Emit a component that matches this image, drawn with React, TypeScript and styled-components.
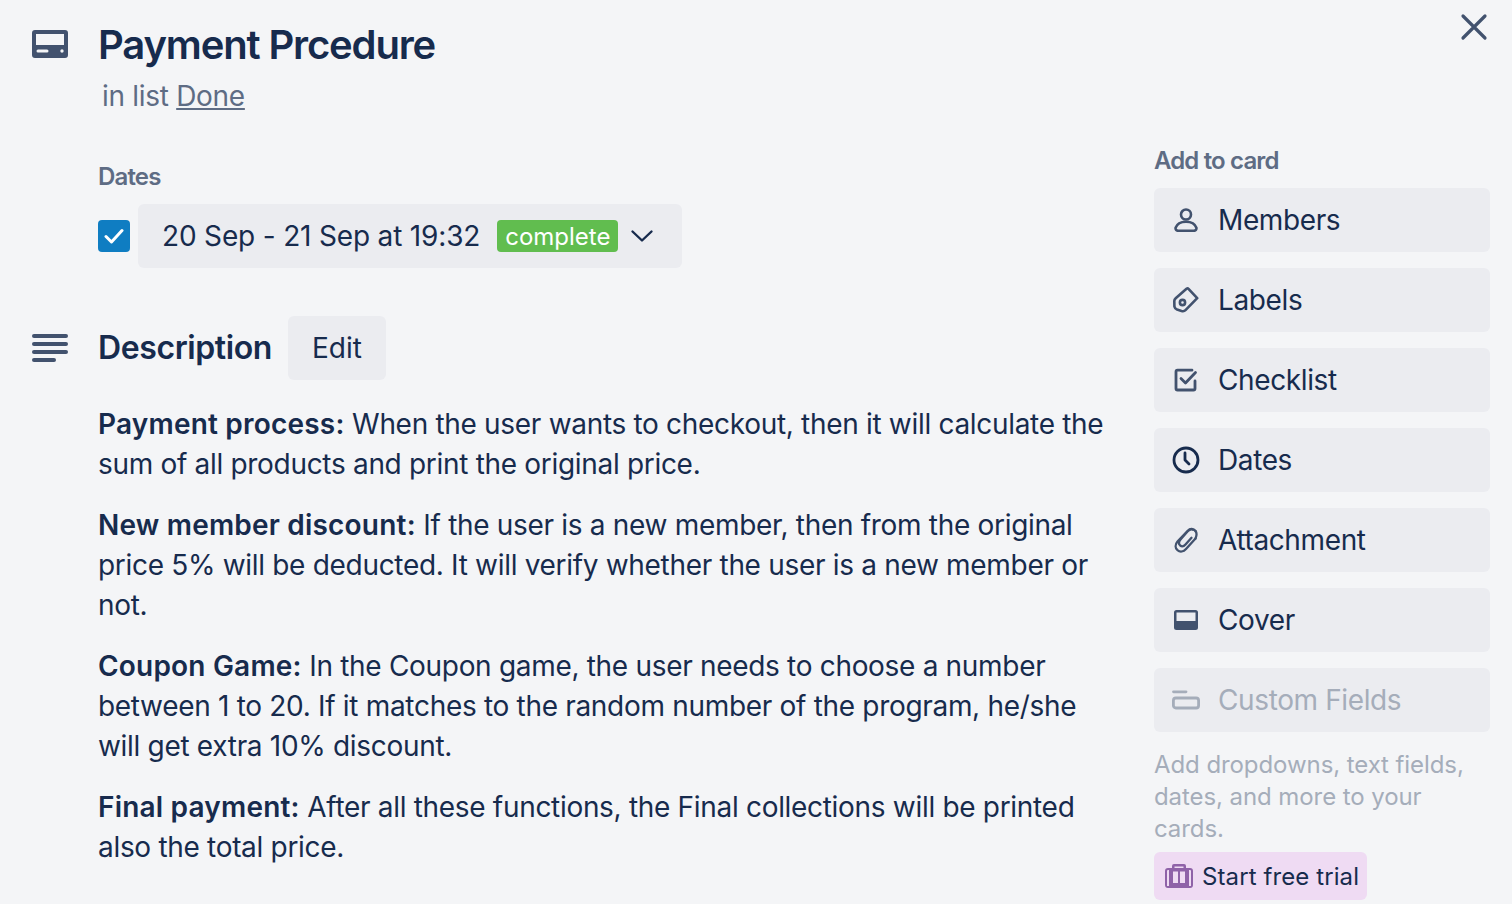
import styled, { createGlobalStyle } from "styled-components";

const GlobalStyle = createGlobalStyle`
  html, body {
    margin: 0;
    padding: 0;
    height: 100%;
    overflow: hidden;
    background: #f4f5f7;
  }
  body {
    font-family: "Inter", "Liberation Sans", sans-serif;
    color: #172b4d;
  }
  * {
    box-sizing: border-box;
  }
`;

const sideItems = [
  { label: "Members", icon: <MemberIcon /> },
  { label: "Labels", icon: <LabelIcon /> },
  { label: "Checklist", icon: <ChecklistIcon /> },
  { label: "Dates", icon: <ClockIcon /> },
  { label: "Attachment", icon: <ClipIcon /> },
  { label: "Cover", icon: <CoverIcon /> },
];

export default function App() {
  return (
    <Page>
      <GlobalStyle />
      <CloseButton aria-label="Close">
        <svg width="28" height="28" viewBox="0 0 28 28" fill="none">
          <path
            d="M3 3 L25 25 M25 3 L3 25"
            stroke="#42526e"
            strokeWidth="3.200"
            strokeLinecap="round"
          />
        </svg>
      </CloseButton>
      <Main>
        <Header>
          <CardIconSlot>
            <svg width="36" height="28" viewBox="0 0 36 28">
              <path
                fillRule="evenodd"
                fill="#42526e"
                d="M3 0 H33 A3 3 0 0 1 36 3 V25 A3 3 0 0 1 33 28 H3 A3 3 0 0 1 0 25 V3 A3 3 0 0 1 3 0 Z M4 4 V15 H32 V4 Z M6 19.5 A1.5 1.5 0 0 0 6 22.500 H15 A1.500 1.500 0 0 0 15 19.500 Z M30 19.300 A1.700 1.700 0 1 0 30 22.700 A1.700 1.700 0 1 0 30 19.300 Z"
              />
            </svg>
          </CardIconSlot>
          <div>
            <Title>Payment Prcedure</Title>
            <ListNote>
              in list <a href="#done">Done</a>
            </ListNote>
          </div>
        </Header>

        <DatesBlock>
          <SectionLabel>Dates</SectionLabel>
          <DatesRow>
            <CheckBox>
              <svg width="20" height="16" viewBox="0 0 20 16" fill="none">
                <path
                  d="M2 8.500 L7.500 14 L18 2.500"
                  stroke="#fff"
                  strokeWidth="3"
                  strokeLinecap="round"
                  strokeLinejoin="round"
                />
              </svg>
            </CheckBox>
            <DateButton>
              <span>20 Sep - 21 Sep at 19:32</span>
              <StatusBadge>complete</StatusBadge>
              <svg width="24" height="14" viewBox="0 0 24 14" fill="none">
                <path
                  d="M2.500 2.500 L12 11.500 L21.500 2.500"
                  stroke="#172b4d"
                  strokeWidth="2.400"
                  strokeLinecap="round"
                  strokeLinejoin="round"
                />
              </svg>
            </DateButton>
          </DatesRow>
        </DatesBlock>

        <DescriptionHead>
          <IconSlot>
            <svg width="36" height="28" viewBox="0 0 36 28" fill="#42526e">
              <rect x="0" y="0" width="36" height="4" rx="2" />
              <rect x="0" y="8" width="36" height="4" rx="2" />
              <rect x="0" y="16" width="36" height="4" rx="2" />
              <rect x="0" y="24" width="24" height="4" rx="2" />
            </svg>
          </IconSlot>
          <SectionTitle>Description</SectionTitle>
          <EditButton>Edit</EditButton>
        </DescriptionHead>

        <Description>
          <p>
            <strong>Payment process:</strong> When the user wants to checkout,
            then it will calculate the sum of all products and print the
            original price.
          </p>
          <p>
            <strong>New member discount:</strong> If the user is a new member,
            then from the original price 5% will be deducted. It will verify
            whether the user is a new member or not.
          </p>
          <p>
            <strong>Coupon Game:</strong> In the Coupon game, the user needs to
            choose a number between 1 to 20. If it matches to the random number
            of the program, he/she will get extra 10% discount.
          </p>
          <p>
            <strong>Final payment:</strong> After all these functions, the Final
            collections will be printed also the total price.
          </p>
        </Description>
      </Main>

      <Sidebar>
        <SideLabel>Add to card</SideLabel>
        <SideList>
          {sideItems.map((item) => (
            <SideButton key={item.label}>
              <SideIcon>{item.icon}</SideIcon>
              {item.label}
            </SideButton>
          ))}
          <SideButton disabled>
            <SideIcon>
              <FieldsIcon />
            </SideIcon>
            Custom Fields
          </SideButton>
        </SideList>
        <UpsellText>
          Add dropdowns, text fields, dates, and more to your cards.
        </UpsellText>
        <TrialButton>
          <svg width="28" height="24" viewBox="0 0 28 24" fill="#8f62a8">
            <path
              fillRule="evenodd"
              d="M9 0 H19 A2 2 0 0 1 21 2 V4 H25 A3 3 0 0 1 28 7 V21 A3 3 0 0 1 25 24 H3 A3 3 0 0 1 0 21 V7 A3 3 0 0 1 3 4 H7 V2 A2 2 0 0 1 9 0 Z M9.500 2.500 V4 H18.500 V2.500 Z M2 7 V22 H4 V6 H3 A1 1 0 0 0 2 7 Z M24 6 V22 H26 V7 A1 1 0 0 0 25 6 Z M8 7.500 V19 H13 V7.500 Z M15 7.500 V19 H20 V7.500 Z"
            />
          </svg>
          Start free trial
        </TrialButton>
      </Sidebar>
    </Page>
  );
}

function MemberIcon() {
  return (
    <svg width="24" height="24" viewBox="0 0 24 24" fill="none" stroke="#42526e" strokeWidth="2.600">
      <circle cx="12" cy="6.500" r="5" />
      <path d="M4 22.800 H20 A2.500 2.500 0 0 0 22.400 19.800 C21 15.800 17 13.800 12 13.800 C7 13.800 3 15.800 1.600 19.800 A2.500 2.500 0 0 0 4 22.800 Z" />
    </svg>
  );
}

function LabelIcon() {
  return (
    <svg width="26" height="26" viewBox="0 0 26 26" fill="none" stroke="#42526e" strokeWidth="2.600" strokeLinejoin="round">
      <path d="M15.500 1.800 L24.200 11.200 L12.500 23.200 C11.500 24.200 10 24.400 8.500 24 L4 22.600 C2.500 22 1.700 21 1.400 19.500 L1.300 14 C1.300 12.800 1.800 12 2.700 11.200 L13.500 1.800 C14.200 1.300 15 1.300 15.500 1.800 Z" />
      <circle cx="9.500" cy="15.500" r="2.600" />
    </svg>
  );
}

function ChecklistIcon() {
  return (
    <svg width="24" height="24" viewBox="0 0 24 24" fill="none" stroke="#42526e" strokeWidth="2.800" strokeLinecap="round" strokeLinejoin="round">
      <path d="M18 2.200 H3.500 A1.500 1.500 0 0 0 2 3.700 V20.500 A1.500 1.500 0 0 0 3.500 22 H19.500 A1.500 1.500 0 0 0 21 20.500 V13" />
      <path d="M7 10.500 L11.500 15 L21.500 4.500" />
    </svg>
  );
}

function ClockIcon() {
  return (
    <svg width="28" height="28" viewBox="0 0 28 28" fill="none" stroke="#172b4d" strokeWidth="2.800" strokeLinecap="round" strokeLinejoin="round">
      <circle cx="14" cy="14" r="12" />
      <path d="M13 7 V14 L17 18" />
    </svg>
  );
}

function ClipIcon() {
  return (
    <svg width="24" height="26" viewBox="0 0 24 26" fill="none" stroke="#42526e" strokeWidth="2.300" strokeLinecap="round">
      <path d="M21.500 4 C19.500 1.200 16 1.200 14 3.500 L3.500 14.500 C1 17.500 1 21 3.500 23.200 C6 25.300 9.500 24.800 12 22 L21.500 11.500" />
      <path d="M19 2.800 C16.800 1.800 15 3 13.500 4.500 L6.500 12.500 C4.500 15 4.800 17.300 6.200 18.500 C7.800 19.800 10 19.200 11.500 17.500 L17.500 10.800" />
      <path d="M21.500 4 C23 6 22.800 8.500 21.500 11.500" />
    </svg>
  );
}

function CoverIcon() {
  return (
    <svg width="24" height="20" viewBox="0 0 24 20" fill="#42526e">
      <path
        fillRule="evenodd"
        d="M2.500 0 H21.500 A2.500 2.500 0 0 1 24 2.500 V17.500 A2.500 2.500 0 0 1 21.500 20 H2.500 A2.500 2.500 0 0 1 0 17.500 V2.500 A2.500 2.500 0 0 1 2.500 0 Z M2.500 2.500 V11 H21.500 V2.500 Z"
      />
    </svg>
  );
}

function FieldsIcon() {
  return (
    <svg width="28" height="20" viewBox="0 0 28 20" fill="none" stroke="#a5adba" strokeWidth="2.800" strokeLinecap="round">
      <path d="M1.500 1.800 H14" />
      <rect x="1.400" y="8" width="25.200" height="10" rx="2.500" />
    </svg>
  );
}

const Page = styled.div`
  position: relative;
  width: 1512px;
  height: 904px;
  overflow: hidden;
  display: grid;
  grid-template-columns: 1154px 336px;
  background: #f4f5f7;
`;

const CloseButton = styled.button`
  position: absolute;
  top: 13px;
  left: 1460px;
  width: 28px;
  height: 28px;
  padding: 0;
  border: 0;
  background: none;
  display: flex;
`;

const Main = styled.main`
  padding: 21px 46px 0 32px;
`;

const Header = styled.header`
  display: flex;
`;

const IconSlot = styled.div`
  flex: none;
  width: 66px;
  display: flex;
`;

const CardIconSlot = styled(IconSlot)`
  padding-top: 9px;
`;

const Title = styled.h1`
  margin: 0;
  font-size: 40px;
  line-height: 48px;
  font-weight: 600;
  letter-spacing: -1.15px;
  color: #172b4d;
`;

const ListNote = styled.div`
  margin: 7px 0 0 4px;
  font-size: 28px;
  line-height: 40px;
  letter-spacing: -0.3px;
  color: #5e6c84;

  a {
    color: #5e6c84;
    text-decoration: underline;
  }
`;

const DatesBlock = styled.section`
  margin: 45px 0 0 66px;
`;

const SectionLabel = styled.h3`
  margin: 0;
  font-size: 24px;
  line-height: 32px;
  font-weight: 600;
  letter-spacing: -0.85px;
  color: #5e6c84;
`;

const DatesRow = styled.div`
  margin-top: 11px;
  display: flex;
  align-items: center;
  gap: 8px;
`;

const CheckBox = styled.div`
  width: 32px;
  height: 32px;
  border-radius: 4px;
  background: #0f7dc2;
  display: flex;
  align-items: center;
  justify-content: center;
`;

const DateButton = styled.div`
  height: 64px;
  width: 544px;
  padding-left: 24px;
  border-radius: 6px;
  background: #ebecf0;
  display: flex;
  align-items: center;
  font-size: 28px;
  letter-spacing: -0.17px;
  color: #172b4d;

  svg {
    margin-left: 12px;
  }
`;

const StatusBadge = styled.span`
  margin-left: 17px;
  height: 32px;
  padding: 0 8px;
  border-radius: 4px;
  background: #61bd4f;
  color: #fff;
  font-size: 24px;
  line-height: 33px;
  letter-spacing: 0;
`;

const DescriptionHead = styled.div`
  margin-top: 48px;
  display: flex;
  align-items: center;
`;

const SectionTitle = styled.h2`
  margin: 0;
  font-size: 32px;
  line-height: 40px;
  font-weight: 600;
  letter-spacing: -0.4px;
  color: #172b4d;
`;

const EditButton = styled.button`
  margin-left: 16px;
  width: 98px;
  height: 64px;
  border: 0;
  border-radius: 6px;
  background: #ebecf0;
  font: inherit;
  font-size: 28px;
  color: #172b4d;
`;

const Description = styled.div`
  margin: 24px 0 0 66px;
  font-size: 28px;
  line-height: 40px;
  letter-spacing: -0.31px;
  color: #172b4d;

  p {
    margin: 0 0 21px;
  }

  strong {
    font-weight: 600;
    letter-spacing: 0.2px;
  }
`;

const Sidebar = styled.aside`
  padding-top: 145px;
`;

const SideLabel = styled(SectionLabel)``;

const SideList = styled.div`
  margin-top: 11px;
  display: flex;
  flex-direction: column;
  gap: 16px;
`;

const SideButton = styled.button`
  height: 64px;
  padding: 0;
  border: 0;
  border-radius: 6px;
  background: #ebecf0;
  display: flex;
  align-items: center;
  font: inherit;
  font-size: 28px;
  letter-spacing: -0.38px;
  text-align: left;
  color: ${(props) => (props.disabled ? "#a5adba" : "#172b4d")};
`;

const SideIcon = styled.span`
  flex: none;
  width: 64px;
  display: flex;
  align-items: center;
  justify-content: center;
`;

const UpsellText = styled.p`
  margin: 17px 0 7px;
  font-size: 24px;
  line-height: 32px;
  letter-spacing: -0.08px;
  color: #a5adba;
`;

const TrialButton = styled.button`
  width: 213px;
  height: 48px;
  padding: 0 0 0 11px;
  border: 0;
  border-radius: 6px;
  background: #efdbf3;
  display: flex;
  align-items: center;
  gap: 9px;
  font: inherit;
  font-size: 24px;
  letter-spacing: 0.1px;
  color: #172b4d;
  white-space: nowrap;
`;
